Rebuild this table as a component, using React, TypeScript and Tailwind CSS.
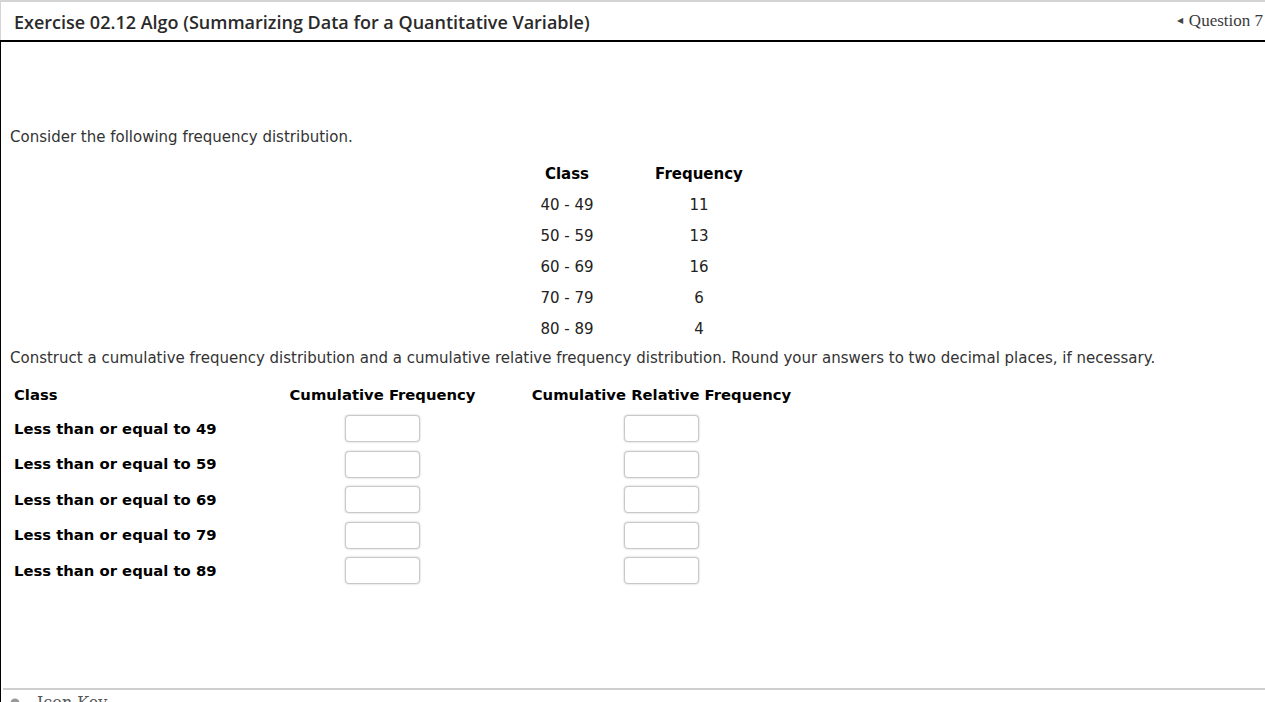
import React from "react";

const FREQ = [
    { cls: "40 - 49", f: "11" },
    { cls: "50 - 59", f: "13" },
    { cls: "60 - 69", f: "16" },
    { cls: "70 - 79", f: "6" },
    { cls: "80 - 89", f: "4" },
];

const CUM = ["49", "59", "69", "79", "89"];

const body = { fontFamily: '"DejaVu Sans", Verdana, sans-serif' };

function Box() {
    return (
        <input
            type="text"
            className="w-[75px] h-[27px] rounded-[4px] border border-[#c9c9c9] bg-white shadow-[0_0_2px_rgba(0,0,0,0.25)] outline-none"
        />
    );
}

export default function App() {
    return (
        <div className="relative h-[702px] w-full overflow-hidden bg-white text-[#333]" style={body}>
            {/* header */}
            <div className="flex h-[40px] items-center justify-between border-t-2 border-l border-[#d4d4d4] pl-[13px] pr-[2px]">
                <h1
                    className="pt-[3px] text-[18px] font-semibold text-[#2a2a2a]"
                    style={{ fontFamily: '"Open Sans", sans-serif' }}
                >
                    Exercise 02.12 Algo (Summarizing Data for a Quantitative Variable)
                </h1>
                <div
                    className="-mt-[1px] flex items-center gap-[6px] text-[17px] text-[#3a3a3a]"
                    style={{ fontFamily: '"Liberation Serif", "Times New Roman", serif' }}
                >
                    <span className="text-[8px] text-[#444]">◀</span>
                    <span>Question 7</span>
                </div>
            </div>

            {/* content */}
            <div className="flex h-[662px] flex-col border-t-2 border-l border-black">
                <div className="h-[646px] shrink-0 pl-[9px] pt-[86px]">
                    <p className="text-[15px] leading-[18px]">Consider the following frequency distribution.</p>

                    <div className="ml-[507px] mt-[19px] grid grid-cols-[100px_164px] text-[15px] text-black">
                        <div className="h-[31px] text-center font-bold leading-[18px]">Class</div>
                        <div className="h-[31px] text-center font-bold leading-[18px]">Frequency</div>
                        {FREQ.map((r) => (
                            <React.Fragment key={r.cls}>
                                <div className="h-[31px] text-center leading-[18px] text-[#222]">{r.cls}</div>
                                <div className="h-[31px] text-center leading-[18px] text-[#222]">{r.f}</div>
                            </React.Fragment>
                        ))}
                    </div>

                    <p className="-mt-[2px] text-[15px] leading-[18px]">
                        Construct a cumulative frequency distribution and a cumulative relative frequency distribution. Round
                        your answers to two decimal places, if necessary.
                    </p>

                    <div className="ml-[4px] mt-[19px] grid grid-cols-[265px_207px_351px] text-[14.8px] font-bold text-black">
                        <div className="h-[25px] leading-[18px]">Class</div>
                        <div className="h-[25px] text-center leading-[18px]">Cumulative Frequency</div>
                        <div className="h-[25px] text-center leading-[18px]">Cumulative Relative Frequency</div>
                        {CUM.map((c) => (
                            <React.Fragment key={c}>
                                <div className="flex h-[35.5px] items-center">Less than or equal to {c}</div>
                                <div className="flex h-[35.5px] items-center justify-center">
                                    <Box />
                                </div>
                                <div className="flex h-[35.5px] items-center justify-center">
                                    <Box />
                                </div>
                            </React.Fragment>
                        ))}
                    </div>
                </div>

                <div className="ml-[2px] shrink-0 border-t-2 border-[#cfcfcf] pl-[6px] pt-[1px]">
                    <div
                        className="flex items-center gap-[4px] text-[16px] text-[#555]"
                        style={{ fontFamily: '"DejaVu Serif", Georgia, serif' }}
                    >
                        <svg width="24" height="12" viewBox="0 0 24 12">
                            <circle cx="6" cy="6" r="4.5" fill="#999" />
                            <path d="M10 6h13" stroke="#888" strokeWidth="2" />
                        </svg>
                        <span>Icon Key</span>
                    </div>
                </div>
            </div>
        </div>
    );
}
